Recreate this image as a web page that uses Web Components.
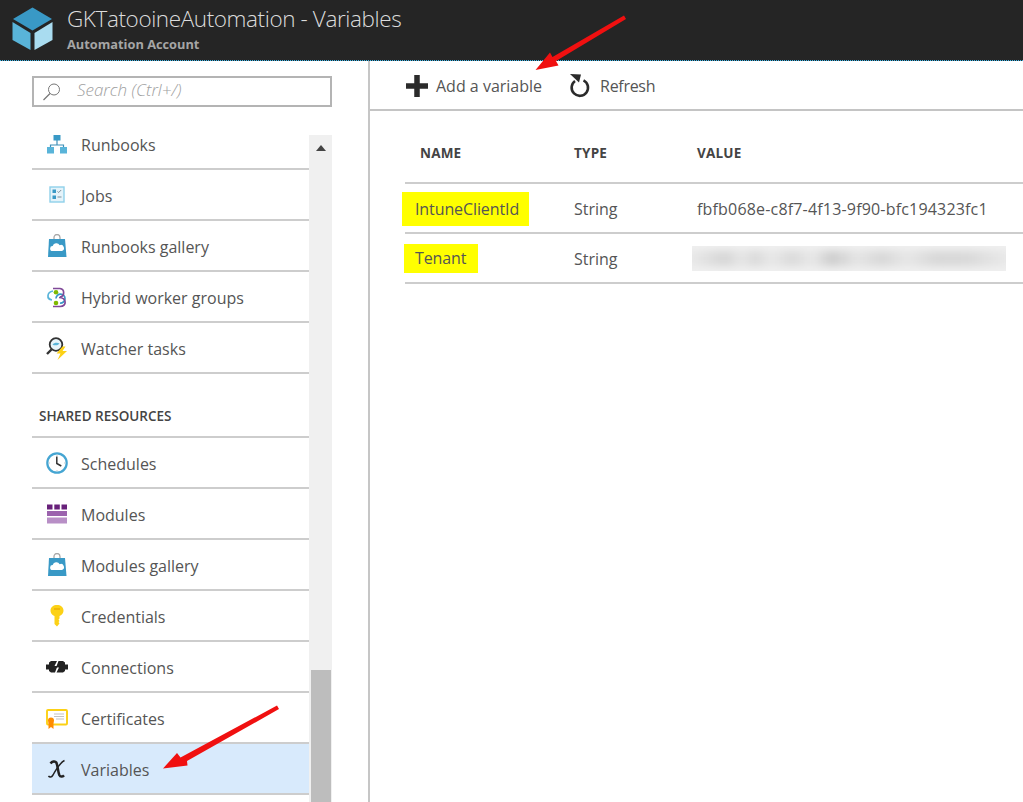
<!DOCTYPE html>
<html>
<head>
<meta charset="utf-8">
<title>Variables</title>
<style>
    html, body { margin: 0; height: 100%; overflow: hidden; background: #fff; }
    body { font-family: "Open Sans", "Liberation Sans", sans-serif; color: #555; }
</style>
</head>
<body>
<blade-page>
    <blade-header slot="header" title="GKTatooineAutomation - Variables" subtitle="Automation Account"></blade-header>
    <side-menu slot="side">
        <menu-item icon="runbooks">Runbooks</menu-item>
        <menu-item icon="jobs">Jobs</menu-item>
        <menu-item icon="gallery">Runbooks gallery</menu-item>
        <menu-item icon="hybrid">Hybrid worker groups</menu-item>
        <menu-item icon="watcher">Watcher tasks</menu-item>
        <menu-section>SHARED RESOURCES</menu-section>
        <menu-item icon="schedules">Schedules</menu-item>
        <menu-item icon="modules">Modules</menu-item>
        <menu-item icon="gallery">Modules gallery</menu-item>
        <menu-item icon="credentials">Credentials</menu-item>
        <menu-item icon="connections">Connections</menu-item>
        <menu-item icon="certificates">Certificates</menu-item>
        <menu-item icon="variables" selected>Variables</menu-item>
    </side-menu>
    <blade-toolbar slot="main">
        <tool-button icon="add">Add a variable</tool-button>
        <tool-button icon="refresh" style="letter-spacing: -0.3px">Refresh</tool-button>
    </blade-toolbar>
    <variable-table slot="main">
        <variable-row name="IntuneClientId" type="String" value="fbfb068e-c8f7-4f13-9f90-bfc194323fc1" mark="wide"></variable-row>
        <variable-row name="Tenant" type="String" blurred></variable-row>
    </variable-table>
</blade-page>

<script>
const ICONS = {
    runbooks: `<svg viewBox="0 0 24 24" width="24" height="24"><path d="M12 8v5M5.500 16v-3h13v3" fill="none" stroke="#3e8fb8" stroke-width="1.200"/><rect x="8.500" y="1.500" width="7" height="7" fill="#3999c6"/><rect x="2" y="15" width="7" height="6.500" fill="#59b4d9"/><rect x="15" y="15" width="7" height="6.500" fill="#59b4d9"/></svg>`,
    jobs: `<svg viewBox="0 0 24 24" width="24" height="24"><rect x="5" y="4" width="14" height="15" fill="#e4f3fa" stroke="#8fd0ea" stroke-width="1.400"/><rect x="7.500" y="6.500" width="3.500" height="3.500" fill="#3999c6"/><rect x="7.500" y="12.500" width="3.500" height="3.500" fill="#3999c6"/><path d="M12.500 8.500l1.200 1 2.500-2.500M12.500 14h4" fill="none" stroke="#7f8f99" stroke-width="1"/></svg>`,
    gallery: `<svg viewBox="0 0 24 24" width="24" height="24"><path d="M9 5V3.500a3 3 0 0 1 6 0V5" fill="none" stroke="#a8a8a8" stroke-width="1.300"/><path d="M4 5h16l1.500 18H3z" fill="#3999c6"/><path d="M7.500 17a2.500 2.500 0 0 1 .2-5 3.800 3.800 0 0 1 7-.8 3 3 0 0 1 2.300 5.800z" fill="#fff"/></svg>`,
    hybrid: `<svg viewBox="0 0 24 24" width="24" height="24"><path d="M8 6C2 7 1 14 7 15" fill="none" stroke="#59b4d9" stroke-width="1.700"/><path d="M15 18A4.500 4.500 0 1 0 11 13.500" fill="none" stroke="#3999c6" stroke-width="1.700"/><path d="M8 3.500h7a4.300 4.300 0 0 1 0 8.500" fill="none" stroke="#804998" stroke-width="1.700"/><path d="M14 12.500C22 13 22 21 15 21.500H8" fill="none" stroke="#804998" stroke-width="1.700"/><circle cx="11" cy="7.300" r="2.300" fill="#7fba00"/><circle cx="11" cy="18" r="2.300" fill="#7fba00"/></svg>`,
    watcher: `<svg viewBox="0 0 24 24" width="24" height="24"><circle cx="11" cy="8.500" r="6.300" fill="#e8f3fa" stroke="#333" stroke-width="1.800"/><path d="M7.500 8.500c1.500-2 5-2.500 7-1-1.500 2-5 2.500-7 1z" fill="#59b4d9"/><path d="M6.500 13.500L2 18" stroke="#333" stroke-width="2.400"/><path d="M17.500 10.500l-6 7h4l-3 6.500 9.500-9h-4.500l3-4.500z" fill="#fcd116"/></svg>`,
    schedules: `<svg viewBox="0 0 24 24" width="24" height="24"><circle cx="12" cy="12" r="9.700" fill="#fff" stroke="#45a5d2" stroke-width="2.200"/><path d="M11.800 5.500V12.500l4.500 2.500" fill="none" stroke="#333" stroke-width="1.500"/><path d="M12 3.800v1M12 19.200v1M3.800 12h1M19.200 12h1" stroke="#bbb" stroke-width="1"/></svg>`,
    modules: `<svg viewBox="0 0 24 24" width="24" height="24"><g fill="#68217a"><rect x="2" y="2.500" width="5.500" height="5"/><rect x="9.300" y="2.500" width="5.500" height="5"/><rect x="16.500" y="2.500" width="5.500" height="5"/></g><rect x="2" y="9" width="20" height="5" fill="#9b62ad"/><rect x="2" y="15.500" width="20" height="6" fill="#b88fc6"/></svg>`,
    credentials: `<svg viewBox="0 0 24 24" width="24" height="24"><path d="M12 1c3.500 0 6.500 2 6.500 5.500S15.500 11.500 14.500 12v2.500l-1 1 1 1.500-1 1 1 1.500-2.500 3-2.500-2.500V12c-1-.5-4-2-4-5.500S8.500 1 12 1z" fill="#fcd116"/><path d="M9 5h6" stroke="#e8a800" stroke-width="1.200"/></svg>`,
    connections: `<svg viewBox="0 0 24 24" width="24" height="24"><path d="M1 9.500h3v-2L6 6h6L9.500 11h3L10 17.500H6L4 16v-1.500H1z" fill="#222"/><path d="M23 9.500h-3v-2L18 6h-4.500L11 12.500h3L11.500 17.500H18l2-1.500v-1.500h3z" fill="#222"/></svg>`,
    certificates: `<svg viewBox="0 0 24 24" width="24" height="24"><rect x="2" y="4" width="20" height="14.500" rx="1" fill="#fff" stroke="#fcd116" stroke-width="1.900"/><path d="M9 8h10M9 10.500h10M11 13h8" stroke="#c4c4c4" stroke-width="1.200"/><path d="M3.500 16v7l2.500-2 2.500 2v-7z" fill="#ff8c00"/><circle cx="6" cy="14.500" r="3" fill="#ff8c00"/></svg>`,
    variables: `<svg viewBox="0 0 24 24" width="24" height="24"><path d="M5.500 6.500C7 4.500 10 3.500 11.300 5.500c1.500 2.500 1.500 9 3 12.500 1 2 3 2.200 4.700.3" fill="none" stroke="#222" stroke-width="2.500"/><path d="M19.500 3.500c-4 2-9 10-11.500 14.500-1.500 2.500-3.500 2.500-4.500.8" fill="none" stroke="#222" stroke-width="1.500"/></svg>`,
    add: `<svg viewBox="0 0 24 24" width="24" height="24"><path d="M12 1v22M1 12h22" fill="none" stroke="#2b2b2b" stroke-width="5.500"/></svg>`,
    refresh: `<svg viewBox="0 0 24 24" width="24" height="24"><path d="M14.500 6.300A8.200 8.200 0 1 1 6 7" fill="none" stroke="#2b2b2b" stroke-width="2.600"/><path d="M1 0l11 .5L10 8.500z" fill="#2b2b2b"/></svg>`
};

class BladePage extends HTMLElement {
    constructor() {
        super();
        this.attachShadow({ mode: 'open' });
    }

    connectedCallback() {
        this.shadowRoot.innerHTML = `
            <style>
                :host {
                    display: flex;
                    flex-direction: column;
                    height: 802px;
                    position: relative;
                    overflow: hidden;
                }
                .body { flex: 1; display: flex; min-height: 0; }
                .side { width: 368px; flex: none; border-right: 2px solid #c6c6c6; min-height: 0; }
                .main { flex: 1; min-width: 0; }
                .arrows { position: absolute; left: 0; top: 0; pointer-events: none; }
            </style>
            <slot name="header"></slot>
            <div class="body">
                <div class="side"><slot name="side"></slot></div>
                <div class="main"><slot name="main"></slot></div>
            </div>
            <svg class="arrows" width="1023" height="802" viewBox="0 0 1023 802">
                <g fill="#f01010" stroke="none">
                    <path d="M624 15.500l2 3.500-70 42 2.500 4.500L535.500 70l14.500-17.500 2.500 4.500z"/>
                    <path d="M277 705.500l2 3.500-92 52 .5 4.500-24.500 3 14-15.500 3.500 4.500z"/>
                </g>
            </svg>
        `;
    }
}

class BladeHeader extends HTMLElement {
    constructor() {
        super();
        this.attachShadow({ mode: 'open' });
    }

    connectedCallback() {
        this.shadowRoot.innerHTML = `
            <style>
                :host {
                    display: flex;
                    align-items: flex-start;
                    height: 60px;
                    background: #252525;
                    border-bottom: 1px dotted #39b3e6;
                    padding-left: 12px;
                    gap: 14px;
                }
                svg { margin-top: 7px; flex: none; }
                .title { font-size: 22.500px; font-weight: 300; line-height: 30px; margin-top: 4px; color: #dcdcdc; white-space: nowrap; letter-spacing: -0.4px; }
                .sub { font-size: 12.800px; font-weight: 700; line-height: 16px; margin-top: 2px; color: #a6a6a6; white-space: nowrap; }
            </style>
            <svg width="41" height="44" viewBox="0 0 41 44">
                <path d="M20.500 0.500L40 12 20.500 23.500 1 12z" fill="#3999c6"/>
                <path d="M0.500 15L18.500 26V43L0.500 33z" fill="#59b4d9"/>
                <path d="M40.500 15L22.500 26V43L40.500 33z" fill="#a9dcf0"/>
            </svg>
            <div>
                <div class="title">${this.getAttribute('title')}</div>
                <div class="sub">${this.getAttribute('subtitle')}</div>
            </div>
        `;
    }
}

class SideMenu extends HTMLElement {
    constructor() {
        super();
        this.attachShadow({ mode: 'open' });
    }

    connectedCallback() {
        this.shadowRoot.innerHTML = `
            <style>
                :host { display: block; height: 741px; padding-left: 32px; box-sizing: border-box; }
                .search {
                    margin-top: 15px;
                    width: 300px;
                    height: 31px;
                    box-sizing: border-box;
                    border: 2px solid #b4b4b4;
                    display: flex;
                    align-items: center;
                    gap: 15px;
                    padding-left: 8px;
                    color: #a0a0a0;
                    font-size: 17px;
                    font-style: italic;
                    font-weight: 300;
                    line-height: 25px;
                }
                .search span { margin-top: -4px; }
                .wrap { display: flex; width: 300px; margin-top: 28px; height: 667px; }
                .list { width: 277px; overflow: hidden; }
                .inner { margin-top: -16px; }
                .bar { width: 23px; background: #f0f0f0; display: flex; flex-direction: column; justify-content: space-between; align-items: center; }
                .up { width: 0; height: 0; margin-top: 10px; border: 5.500px solid transparent; border-top: 0; border-bottom: 6px solid #444; }
                .thumb { width: 20px; height: 132px; background: #bdbdbd; }
            </style>
            <div class="search">
                <svg width="20" height="20" viewBox="0 0 20 20"><circle cx="12" cy="7.500" r="5.500" fill="none" stroke="#777" stroke-width="1"/><path d="M8 11.500L1.500 18" stroke="#777" stroke-width="1.200"/></svg>
                <span>Search (Ctrl+/)</span>
            </div>
            <div class="wrap">
                <div class="list"><div class="inner"><slot></slot></div></div>
                <div class="bar"><div class="up"></div><div class="thumb"></div></div>
            </div>
        `;
    }
}

class MenuItem extends HTMLElement {
    constructor() {
        super();
        this.attachShadow({ mode: 'open' });
    }

    connectedCallback() {
        this.shadowRoot.innerHTML = `
            <style>
                :host {
                    display: flex;
                    align-items: center;
                    height: 49px;
                    padding-left: 13px;
                    gap: 12px;
                    border-bottom: 2px solid #cdcdcd;
                    font-size: 16px;
                    color: #555;
                    white-space: nowrap;
                }
                :host([selected]) { background: #d8eafc; }
                svg { display: block; flex: none; }
                .label { padding-top: 2px; }
            </style>
            ${ICONS[this.getAttribute('icon')]}
            <span class="label"><slot></slot></span>
        `;
    }
}

class MenuSection extends HTMLElement {
    constructor() {
        super();
        this.attachShadow({ mode: 'open' });
    }

    connectedCallback() {
        this.shadowRoot.innerHTML = `
            <style>
                :host {
                    display: flex;
                    align-items: center;
                    padding: 21px 0 0 7px;
                    height: 41px;
                    border-bottom: 2px solid #cdcdcd;
                    font-size: 13.500px;
                    font-weight: 600;
                    color: #444;
                    white-space: nowrap;
                }
            </style>
            <slot></slot>
        `;
    }
}

class BladeToolbar extends HTMLElement {
    constructor() {
        super();
        this.attachShadow({ mode: 'open' });
    }

    connectedCallback() {
        this.shadowRoot.innerHTML = `
            <style>
                :host {
                    display: flex;
                    align-items: center;
                    height: 48px;
                    padding-left: 35px;
                    gap: 27px;
                    border-bottom: 2px solid #c4c4c4;
                }
            </style>
            <slot></slot>
        `;
    }
}

class ToolButton extends HTMLElement {
    constructor() {
        super();
        this.attachShadow({ mode: 'open' });
    }

    connectedCallback() {
        this.shadowRoot.innerHTML = `
            <style>
                :host { display: flex; align-items: center; gap: 7px; font-size: 16px; color: #555; white-space: nowrap; padding-top: 2px; }
                svg { display: block; flex: none; overflow: visible; }
            </style>
            ${ICONS[this.getAttribute('icon')]}
            <slot></slot>
        `;
    }
}

class VariableTable extends HTMLElement {
    constructor() {
        super();
        this.attachShadow({ mode: 'open' });
    }

    connectedCallback() {
        this.shadowRoot.innerHTML = `
            <style>
                :host { display: block; margin-left: 35px; }
                .head {
                    display: grid;
                    grid-template-columns: 154px 123px 1fr;
                    padding: 13px 0 0 15px;
                    height: 58px;
                    align-items: center;
                    border-bottom: 2px solid #cdcdcd;
                    font-size: 13.500px;
                    letter-spacing: 0.2px;
                    font-weight: 700;
                    color: #444;
                }
            </style>
            <div class="head"><span>NAME</span><span>TYPE</span><span>VALUE</span></div>
            <slot></slot>
        `;
    }
}

class VariableRow extends HTMLElement {
    constructor() {
        super();
        this.attachShadow({ mode: 'open' });
    }

    connectedCallback() {
        const wide = this.getAttribute('mark') === 'wide';
        const value = this.hasAttribute('blurred')
            ? `<div class="blur"><div class="smear"></div></div>`
            : `<span class="value">${this.getAttribute('value')}</span>`;
        this.shadowRoot.innerHTML = `
            <style>
                :host {
                    display: grid;
                    grid-template-columns: 169px 123px 1fr;
                    height: 47px;
                    padding-top: 1px;
                    align-items: center;
                    border-bottom: 2px solid #cdcdcd;
                    font-size: 16px;
                    color: #555;
                    white-space: nowrap;
                }
                .value { letter-spacing: 0.18px; }
                .mark { justify-self: start; margin-left: -3px; background: #ffff00; color: #555; letter-spacing: -0.1px; }
                .mark.wide { padding: 6px 10px 6px 13px; }
                .mark.narrow { margin-left: -1px; padding: 3px 12px 4px 11px; }
                .blur { margin-left: -5px; width: 314px; height: 25px; margin-top: -1px; background: #f0f0f0; overflow: hidden; }
                .smear {
                    height: 15px;
                    margin: 5px -6px 0;
                    filter: blur(4px);
                    background: linear-gradient(90deg, #e8e8e8 6px, #d4d4d4 39px, #e6e6e6 56px, #d8d8d8 69px, #e8e8e8 86px, #d8d8d8 106px, #e8e8e8 126px, #cbcbcb 146px, #e4e4e4 171px, #d6d6d6 196px, #e6e6e6 221px, #d6d6d6 251px, #d8d8d8 283px, #e8e8e8 320px);
                }
            </style>
            <span class="mark ${wide ? 'wide' : 'narrow'}">${this.getAttribute('name')}</span>
            <span>${this.getAttribute('type')}</span>
            ${value}
        `;
    }
}

customElements.define('blade-page', BladePage);
customElements.define('blade-header', BladeHeader);
customElements.define('side-menu', SideMenu);
customElements.define('menu-item', MenuItem);
customElements.define('menu-section', MenuSection);
customElements.define('blade-toolbar', BladeToolbar);
customElements.define('tool-button', ToolButton);
customElements.define('variable-table', VariableTable);
customElements.define('variable-row', VariableRow);
</script>
</body>
</html>
